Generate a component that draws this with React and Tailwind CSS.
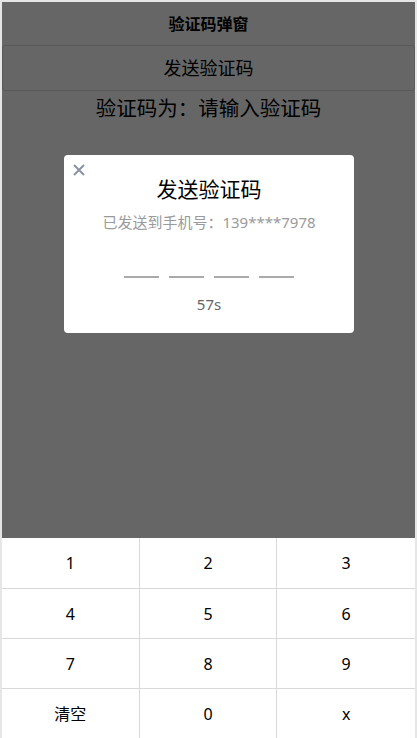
import { useState } from "react";

const KEYS = ["1", "2", "3", "4", "5", "6", "7", "8", "9", "清空", "0", "x"];

export default function App() {
  const [code, setCode] = useState("");
  const [seconds] = useState(57);
  const [open, setOpen] = useState(true);

  function press(k) {
    if (k === "清空") return setCode("");
    if (k === "x") return setCode(code.slice(0, -1));
    if (code.length < 4) setCode(code + k);
  }

  return (
    <div
      className="relative h-[738px] w-full overflow-hidden border-x-2 border-t-2 border-[#e6e6e6] bg-white text-[#333]"
      style={{ fontFamily: '"Noto Sans", "Noto Sans CJK SC", sans-serif' }}
    >
      <div className="flex h-[43px] items-center justify-center text-[16px] font-bold text-black">
        验证码弹窗
      </div>
      <button
        onClick={() => setOpen(true)}
        className="flex h-[46px] w-full items-center justify-center rounded-[3px] border border-[#e0e0e0] bg-white text-[18px] text-black"
      >
        发送验证码
      </button>
      <div className="mt-[3px] text-center text-[20.5px] leading-[28px] text-black">
        验证码为：{code || "请输入验证码"}
      </div>

      {open && (
        <div className="absolute inset-0 bg-black/60">
          <div className="absolute left-[62px] top-[153px] h-[178px] w-[290px] rounded-[4px] bg-white">
            <button
              onClick={() => setOpen(false)}
              className="absolute left-[8px] top-[8px] text-[#8a93a3]"
            >
              <svg width="14" height="14" viewBox="0 0 14 14" fill="none">
                <path d="M2 2 L12 12 M12 2 L2 12" stroke="currentColor" strokeWidth="2" />
              </svg>
            </button>
            <div className="pt-[19px] text-center text-[21px] leading-[30px] text-black">
              发送验证码
            </div>
            <div className="mt-[8px] text-center text-[15px] leading-[20px] text-[#9a9a9a]">
              已发送到手机号：139****7978
            </div>
            <div className="mt-[22px] flex justify-center gap-[10px]">
              {[0, 1, 2, 3].map((i) => (
                <div
                  key={i}
                  className="flex h-[24px] w-[35px] items-end justify-center border-b-2 border-[#aaaaaa] text-[16px] text-black"
                >
                  {code[i] || ""}
                </div>
              ))}
            </div>
            <div className="mt-[15px] text-center text-[15px] leading-[22px] text-[#666]">
              {seconds}s
            </div>
          </div>
        </div>
      )}

      <div className="absolute bottom-0 left-0 right-0 z-10 grid grid-cols-3 bg-white">
        {KEYS.map((k, i) => (
          <button
            key={k}
            onClick={() => press(k)}
            className={
              "flex h-[50px] items-center justify-center text-[16px] text-black " +
              (i % 3 !== 2 ? "border-r border-[#d9d9d9] " : "") +
              (i >= 3 ? "border-t border-[#d9d9d9]" : "")
            }
          >
            {k}
          </button>
        ))}
      </div>
    </div>
  );
}
